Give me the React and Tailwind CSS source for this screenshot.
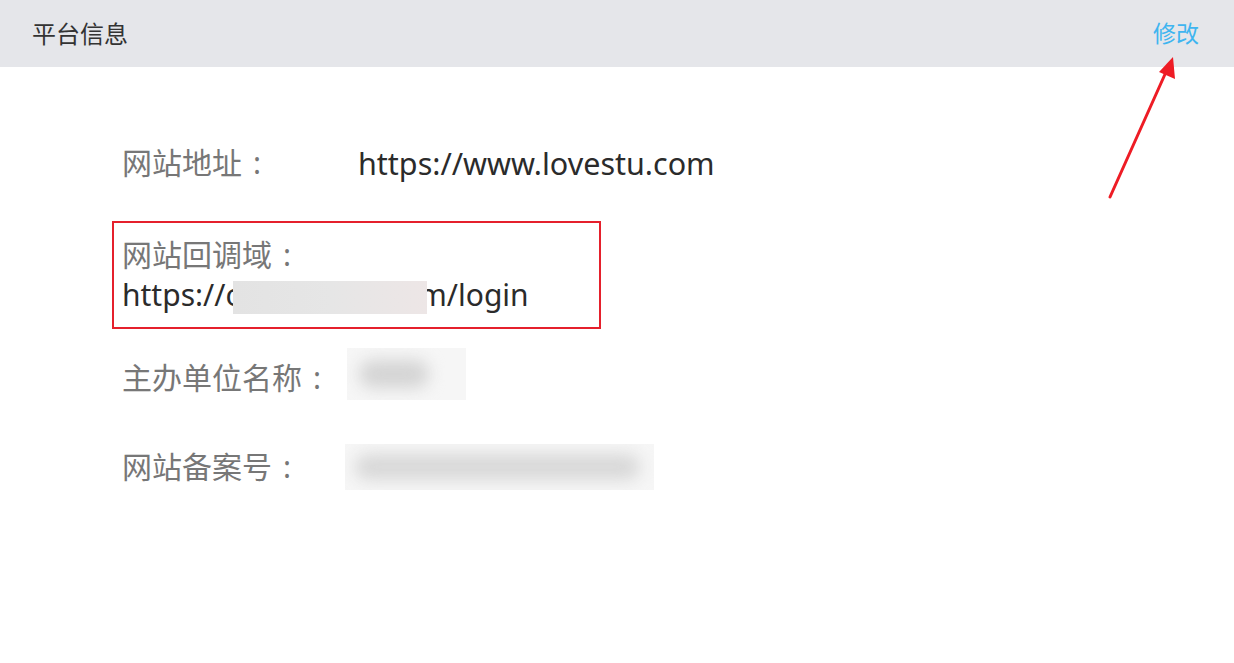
import React from "react";

const cjk = { fontFamily: '"Noto Sans", "Noto Sans CJK SC", sans-serif' };

function Label({ text }) {
  return (
    <span>
      {text}
      <span className="inline-block w-[1em] text-center">:</span>
    </span>
  );
}

export default function App() {
  return (
    <div className="relative w-[1234px] h-[663px] bg-white overflow-hidden" style={cjk}>
      <div className="h-[67px] bg-[#e5e6ea] flex items-center justify-between pl-[32px] pr-[35px]">
        <span className="text-[24px] text-[#333333]">平台信息</span>
        <span className="text-[23px] text-[#3fb5f0]">修改</span>
      </div>

      <div className="pl-[122px] pt-[76px]">
        <div className="flex items-center h-[40px]">
          <div className="w-[236px] shrink-0 text-[30px] text-[#777777] leading-[40px]">
            <Label text="网站地址" />
          </div>
          <span className="text-[30.5px] text-[#2b2b2b] leading-[40px]">https://www.lovestu.com</span>
        </div>

        <div className="-ml-[10px] mt-[38px] w-[489px] border-2 border-[#e5202c] pl-[8px] pt-[12px] pb-[12px]">
          <div className="text-[30px] text-[#777777] leading-[40px]">
            <Label text="网站回调域" />
          </div>
          <div className="relative text-[30px] text-[#2b2b2b] leading-[40px] flex">
            <span>https://c</span>
            <span className="inline-block w-[179px]"></span>
            <span>m/login</span>
            <span className="absolute left-[111px] top-[6px] w-[194px] h-[33px] bg-gradient-to-r from-[#e3e3e3] via-[#e6e6e6] to-[#ede6e6]"></span>
          </div>
        </div>

        <div className="flex items-start mt-[19px] h-[52px]">
          <div className="w-[225px] shrink-0 pt-[10px] text-[30px] text-[#777777] leading-[40px]">
            <Label text="主办单位名称" />
          </div>
          <div className="relative w-[119px] h-[52px] bg-[#f6f6f6] overflow-hidden">
            <div className="absolute left-[12px] top-[12px] w-[70px] h-[28px] rounded-full bg-[#d4d4d4] blur-[8px]"></div>
          </div>
        </div>

        <div className="flex items-center mt-[44px] h-[46px]">
          <div className="w-[223px] shrink-0 text-[30px] text-[#777777] leading-[40px]">
            <Label text="网站备案号" />
          </div>
          <div className="relative w-[309px] h-[46px] bg-[#f6f6f6] overflow-hidden">
            <div className="absolute left-[10px] top-[10px] w-[285px] h-[26px] rounded-full bg-[#d8d8d8] blur-[8px]"></div>
          </div>
        </div>
      </div>

      <svg className="absolute left-0 top-0 pointer-events-none" width="1234" height="663">
        <line x1="1110" y1="197" x2="1166" y2="72" stroke="#ee1c25" strokeWidth="3" strokeLinecap="round" />
        <polygon points="1173,57 1175,79 1159,72" fill="#ee1c25" />
      </svg>
    </div>
  );
}
